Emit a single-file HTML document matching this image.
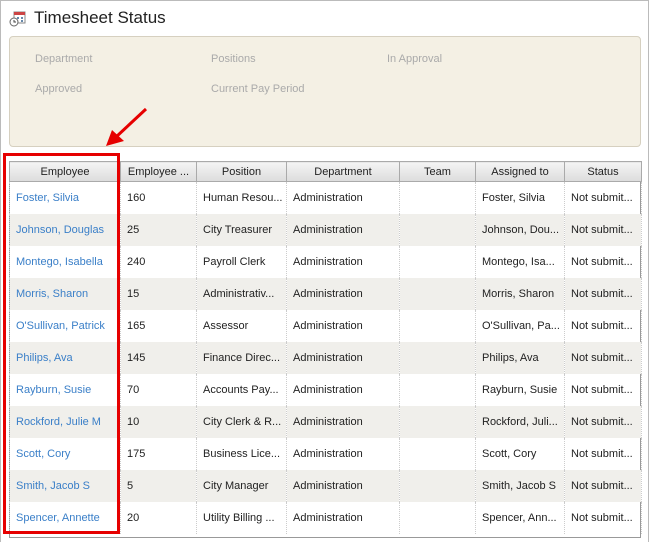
<!DOCTYPE html>
<html><head><style>
*{margin:0;padding:0;box-sizing:border-box}
body{width:649px;height:542px;background:#fff;position:relative;overflow:hidden;font-family:"Liberation Sans",sans-serif;font-size:11px;color:#222}
.frame{position:absolute;left:0;top:0;width:649px;height:542px;border:1px solid #bbb;border-bottom:none}
.title{position:absolute;left:34px;top:8px;font-size:17px;color:#222}
.panel{position:absolute;left:9px;top:36px;width:632px;height:111px;background:#f4f0e4;border:1px solid #d6d0c0;border-radius:4px}
.lbl{position:absolute;color:#aaa;font-size:11px}
table{position:absolute;left:9px;top:161px;border-collapse:collapse;table-layout:fixed;width:632px}
th{height:20px;background:linear-gradient(#f4f4f4,#dcdcdc);border:1px solid #aaa;font-weight:normal;font-size:11px;color:#222;white-space:nowrap;overflow:hidden}
td{height:32px;padding-left:6px;white-space:nowrap;overflow:hidden;border-left:1px dotted #ccc;border-right:1px dotted #ccc}
tr:nth-child(odd) td{background:#f0efeb}
td:first-child{color:#3a7fc8}
.grid{position:absolute;left:9px;top:161px;width:632px;height:377px;border:1px solid #999;border-top:none}
.red{position:absolute;left:3px;top:153px;width:117px;height:381px;border:3px solid #e60000}
</style></head><body>
<div class="frame"></div>
<svg style="position:absolute;left:9px;top:10px" width="18" height="18" viewBox="0 0 18 18"><rect x="5" y="2" width="11" height="11" fill="#fff" stroke="#888"/><rect x="5" y="2" width="11" height="3" fill="#c44"/><rect x="8" y="7" width="2" height="2" fill="#68a"/><rect x="12" y="7" width="2" height="2" fill="#68a"/><rect x="12" y="10" width="2" height="2" fill="#68a"/><circle cx="5" cy="12" r="4" fill="#fff" stroke="#666"/><path d="M5 10v2h2" stroke="#444" fill="none"/></svg>
<div class="title">Timesheet Status</div>
<div class="panel">
<div class="lbl" style="left:25px;top:16px">Department</div>
<div class="lbl" style="left:201px;top:16px">Positions</div>
<div class="lbl" style="left:377px;top:16px">In Approval</div>
<div class="lbl" style="left:25px;top:46px">Approved</div>
<div class="lbl" style="left:201px;top:46px">Current Pay Period</div>
</div>
<div class="grid"></div>
<table>
<colgroup><col style="width:111px"><col style="width:76px"><col style="width:90px"><col style="width:113px"><col style="width:76px"><col style="width:89px"><col style="width:77px"></colgroup>
<tr><th>Employee</th><th>Employee ...</th><th>Position</th><th>Department</th><th>Team</th><th>Assigned to</th><th>Status</th></tr>
<tr><td>Foster, Silvia</td><td>160</td><td>Human Resou...</td><td>Administration</td><td></td><td>Foster, Silvia</td><td>Not submit...</td></tr>
<tr><td>Johnson, Douglas</td><td>25</td><td>City Treasurer</td><td>Administration</td><td></td><td>Johnson, Dou...</td><td>Not submit...</td></tr>
<tr><td>Montego, Isabella</td><td>240</td><td>Payroll Clerk</td><td>Administration</td><td></td><td>Montego, Isa...</td><td>Not submit...</td></tr>
<tr><td>Morris, Sharon</td><td>15</td><td>Administrativ...</td><td>Administration</td><td></td><td>Morris, Sharon</td><td>Not submit...</td></tr>
<tr><td>O'Sullivan, Patrick</td><td>165</td><td>Assessor</td><td>Administration</td><td></td><td>O'Sullivan, Pa...</td><td>Not submit...</td></tr>
<tr><td>Philips, Ava</td><td>145</td><td>Finance Direc...</td><td>Administration</td><td></td><td>Philips, Ava</td><td>Not submit...</td></tr>
<tr><td>Rayburn, Susie</td><td>70</td><td>Accounts Pay...</td><td>Administration</td><td></td><td>Rayburn, Susie</td><td>Not submit...</td></tr>
<tr><td>Rockford, Julie M</td><td>10</td><td>City Clerk &amp; R...</td><td>Administration</td><td></td><td>Rockford, Juli...</td><td>Not submit...</td></tr>
<tr><td>Scott, Cory</td><td>175</td><td>Business Lice...</td><td>Administration</td><td></td><td>Scott, Cory</td><td>Not submit...</td></tr>
<tr><td>Smith, Jacob S</td><td>5</td><td>City Manager</td><td>Administration</td><td></td><td>Smith, Jacob S</td><td>Not submit...</td></tr>
<tr><td>Spencer, Annette</td><td>20</td><td>Utility Billing ...</td><td>Administration</td><td></td><td>Spencer, Ann...</td><td>Not submit...</td></tr>
</table>
<div class="red"></div>
<svg style="position:absolute;left:100px;top:105px" width="50" height="45"><line x1="46" y1="4" x2="16" y2="32" stroke="#e60000" stroke-width="3"/><polygon points="6,41 12,25 24,36" fill="#e60000"/></svg>
</body></html>
